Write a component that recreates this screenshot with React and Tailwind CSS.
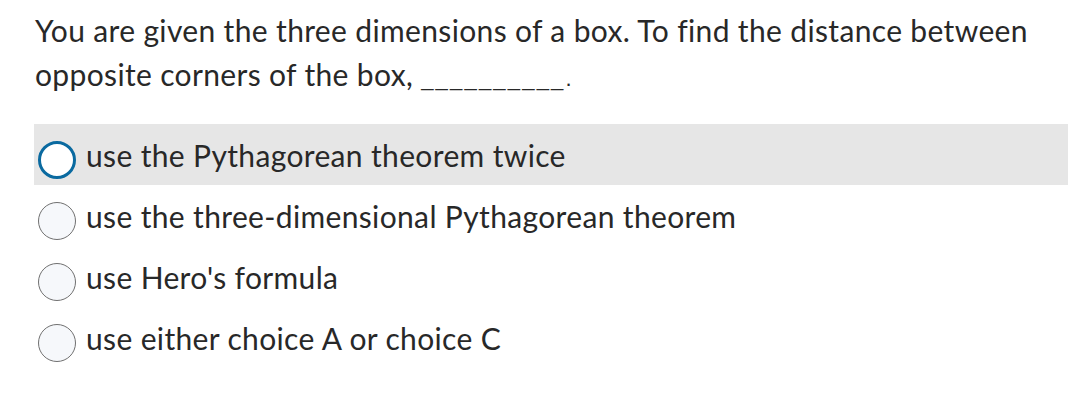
export default function App() {
  const options = [
    "use the Pythagorean theorem twice",
    "use the three-dimensional Pythagorean theorem",
    "use Hero's formula",
    "use either choice A or choice C",
  ];
  return (
    <div className="w-[1080px] h-[416px] bg-white text-[#282828] font-['Lato',sans-serif]">
      <div className="pl-[35px] pr-[12px] pt-[8px]">
        <p className="text-[30px] leading-[44px] tracking-[0.35px] [font-variant-ligatures:none]">
          You are given the three dimensions of a box. To find the distance between opposite corners of the box,{" "}
          <span className="font-['Liberation_Sans',sans-serif] text-[22px] tracking-[2.2px]">__________.</span>
        </p>
      </div>
      <div className="mt-[23px] pl-[34px] pr-[12px] flex flex-col">
        {options.map((o, i) => (
          <div
            key={i}
            className={`flex items-center h-[61px] ${i === 0 ? "bg-[#e6e6e6]" : ""}`}
          >
            <div
              className={`ml-[4px] w-[38px] h-[38px] rounded-full shrink-0 mt-[11px] ${
                i === 0
                  ? "border-[3px] border-[#0a6aa0] bg-white"
                  : "border-[1.5px] border-[#707070] bg-[#f6f8fb]"
              }`}
            />
            <span className="ml-[10px] text-[30px] leading-[36px] tracking-[0.35px]">{o}</span>
          </div>
        ))}
      </div>
    </div>
  );
}
